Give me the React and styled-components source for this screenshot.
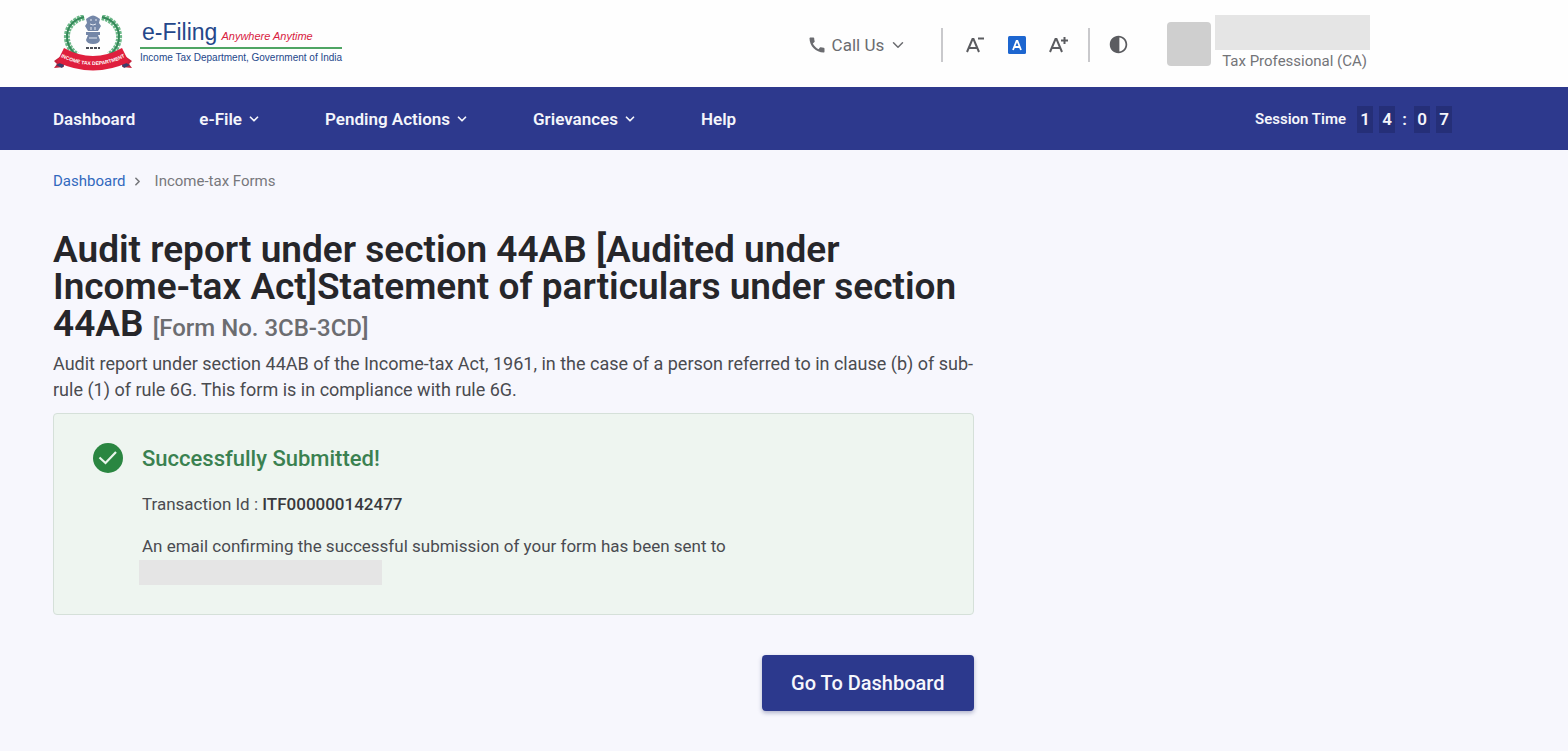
import React from "react";
import styled, { createGlobalStyle } from "styled-components";
import { MdCall, MdContrast } from "react-icons/md";
import { FiChevronDown, FiChevronRight } from "react-icons/fi";

const GlobalStyle = createGlobalStyle`
  * {
    box-sizing: border-box;
  }
  body {
    margin: 0;
    min-height: 100vh;
    background: #f7f7fd;
    color: #4a4b50;
    font-family: Roboto, "Liberation Sans", sans-serif;
  }
  h1, h2, p {
    margin: 0;
  }
  button {
    padding: 0;
    border: 0;
    background: none;
    font-family: inherit;
    cursor: pointer;
  }
  a {
    text-decoration: none;
  }
`;

// top header
const Header = styled.header`
  display: flex;
  align-items: center;
  justify-content: space-between;
  height: 87px;
  padding: 0 196px 0 53px;
  background: #fefefe;
`;

const Brand = styled.a`
  display: flex;
  align-items: center;
  gap: 7px;
  color: #24478a;
  font-family: "Liberation Sans", sans-serif;
`;

const BrandText = styled.div`
  display: flex;
  flex-direction: column;
`;

const BrandTop = styled.div`
  display: flex;
  align-items: baseline;
  gap: 4px;
  padding-left: 2px;
  border-bottom: 2px solid #4fa564;
  line-height: 22px;
`;

const BrandName = styled.span`
  font-size: 23px;
`;

const BrandTag = styled.span`
  color: #d8213f;
  font-size: 11px;
  font-style: italic;
`;

const BrandSub = styled.span`
  font-size: 10px;
  line-height: 18px;
`;

const Tools = styled.div`
  display: flex;
  align-items: center;
  padding-top: 2px;
`;

const CallButton = styled.button`
  display: flex;
  align-items: center;
  gap: 5px;
  margin-right: 34px;
  color: #6b6c70;
  font-size: 17px;
`;

const ToolGroup = styled.div`
  display: flex;
  align-items: center;
  gap: 23px;
  height: 34px;
  padding: 0 20px 0 ${(props) => (props.$narrow ? "18px" : "23px")};
  border-left: 2px solid #c9c9cc;
`;

const ToolButton = styled.button`
  display: flex;
  color: #5b5c60;
`;

const Profile = styled.div`
  display: flex;
  align-items: center;
  gap: 4px;
  margin-left: 18px;
  padding-bottom: 2px;
`;

const Avatar = styled.div`
  width: 44px;
  height: 44px;
  border-radius: 4px;
  background: #cfcfcf;
`;

const ProfileText = styled.div`
  display: flex;
  flex-direction: column;
  font-size: 15px;
  line-height: 22px;
  color: #737478;
`;

const Role = styled.span`
  padding: 0 5px 0 7px;
`;

const Masked = styled.div`
  width: ${(props) => props.$width};
  height: ${(props) => props.$height};
  background: #e5e5e5;
`;

// main menu
const Nav = styled.nav`
  display: flex;
  align-items: center;
  justify-content: space-between;
  height: 63px;
  padding: 1px 116px 0 53px;
  background: #2d398d;
  color: #f4f5fb;
`;

const Menu = styled.div`
  display: flex;
  gap: 64px;
`;

const MenuItem = styled.button`
  display: flex;
  align-items: center;
  gap: 5px;
  color: inherit;
  font-size: 17px;
  font-weight: 600;
  line-height: 24px;
`;

const Session = styled.div`
  display: flex;
  align-items: center;
  gap: 6px;
  font-size: 17px;
  font-weight: 600;
`;

const SessionLabel = styled.span`
  margin-right: 5px;
  font-size: 15px;
`;

const Digit = styled.span`
  width: 16px;
  line-height: 27px;
  text-align: center;
  background: #252f78;
`;

const Colon = styled.span`
  width: 7px;
  text-align: center;
`;

// page content
const Page = styled.main`
  display: grid;
  grid-template-columns: minmax(0, 17fr) minmax(0, 10fr);
  padding: 20px 53px 40px;
`;

const Content = styled.section`
  grid-column: 1;
`;

const Breadcrumb = styled.nav`
  display: flex;
  align-items: center;
  gap: 5px;
  margin-bottom: 39px;
  color: #77787c;
  font-size: 15px;
  line-height: 22px;
`;

const CrumbLink = styled.a`
  color: #3269bd;
`;

const CrumbText = styled.span`
  margin-left: 6px;
`;

const Title = styled.h1`
  color: #26262a;
  font-size: 37px;
  font-weight: 600;
  line-height: 37px;
`;

const FormNo = styled.span`
  color: #6c6d71;
  font-size: 24px;
  font-weight: 500;
  line-height: 24px;
`;

const Description = styled.p`
  margin: 9px 0 10px;
  font-size: 18px;
  line-height: 26px;
`;

const SuccessBox = styled.div`
  display: flex;
  align-items: flex-start;
  gap: 16px;
  padding: 29px 39px;
  border: 1px solid #d5e0d9;
  border-radius: 4px;
  background: #eef5f0;
`;

const SuccessBody = styled.div`
  display: flex;
  flex-direction: column;
  font-size: 17px;
  line-height: 26px;
`;

const SuccessTitle = styled.h2`
  margin-bottom: 16px;
  padding-left: 3px;
  color: #3a8150;
  font-size: 22px;
  font-weight: 500;
  line-height: 32px;
`;

const SuccessText = styled.p`
  margin-bottom: ${(props) => (props.$last ? "1px" : "16px")};
  padding-left: 3px;
  b {
    color: #38393d;
    font-weight: 500;
  }
`;

const Actions = styled.div`
  display: flex;
  justify-content: flex-end;
  margin-top: 40px;
`;

const PrimaryButton = styled.button`
  height: 56px;
  padding: 0 29px;
  border-radius: 4px;
  background: #2c398d;
  box-shadow: 0 2px 4px rgba(40, 50, 110, 0.35);
  color: #f6f7fc;
  font-size: 20px;
  font-weight: 500;
`;

const menuItems = [
  { label: "Dashboard" },
  { label: "e-File", drop: true },
  { label: "Pending Actions", drop: true },
  { label: "Grievances", drop: true },
  { label: "Help" },
];

const Emblem = () => (
  <svg width="80" height="58" viewBox="0 3 80 58" aria-hidden="true">
    {/* laurel */}
    <g fill="none" stroke="#6db889">
      <path d="M31 5 C9 11 10 34 24 43" strokeWidth="6" strokeDasharray="2.8 1" />
      <path d="M49 5 C71 11 70 34 56 43" strokeWidth="6" strokeDasharray="2.8 1" />
      <path d="M31 5 C9 11 10 34 24 43 M49 5 C71 11 70 34 56 43" stroke="#35895a" strokeWidth="2" />
    </g>
    {/* lion capital */}
    <g fill="#7487a8">
      <path d="M36 5 Q40 2 44 5 L47 7 L46 11 L48 14 L45 19 H35 L32 14 L34 11 L33 7 Z" />
      <rect x="33" y="20" width="14" height="3" />
      <path d="M35 23 H45 L47 28 Q46 32 40 32 Q34 32 33 28 Z" />
    </g>
    <path d="M37 8 H39 M42 8 H44 M37 12 Q40 14 43 12 M38 15 V18 M42 15 V18 M36 26 H44" stroke="#e4e9f1" fill="none" />
    <path d="M33 36 H47" stroke="#4b4f58" strokeWidth="2" strokeDasharray="3 1" />
    {/* ribbon */}
    <path d="M8 44 L1 49 L4 52 L1 56 L11 55 Z M72 44 L79 49 L76 52 L79 56 L69 55 Z" fill="#c4233c" />
    <path d="M3 53 L7 51 L12 52 L9 56 Z M77 53 L73 51 L68 52 L71 56 Z" fill="#39406b" />
    <path d="M11 36 Q40 52 69 36 L76 50 Q40 67 4 50 Z" fill="#df1f3d" />
    <path id="ribbon" d="M6 44 Q40 62 74 44" fill="none" />
    <text fill="#fff" fontSize="5" fontWeight="700" textAnchor="middle" fontFamily="Liberation Sans, sans-serif">
      <textPath href="#ribbon" startOffset="50%">INCOME TAX DEPARTMENT</textPath>
    </text>
  </svg>
);

// letter A with a minus or plus at the top right
const FontSizeIcon = ({ sign }) => (
  <svg width="19" height="18" viewBox="0 0 19 18" fill="none" stroke="currentColor" strokeWidth="2">
    <path d="M1 16 L6.5 3 H7.5 L13 16 M3 12 H11" />
    <path d={sign === "plus" ? "M12 4.5 H19 M15.5 1 V8" : "M12 2.5 H18"} />
  </svg>
);

const FontResetIcon = () => (
  <svg width="18" height="18" viewBox="0 0 18 18" fill="none">
    <rect width="18" height="18" rx="1.5" fill="#1d66d0" />
    <path d="M5 14 L8.6 5 H9.4 L13 14 M6.3 11 H11.7" stroke="#fff" strokeWidth="1.8" />
  </svg>
);

const SuccessIcon = () => (
  <svg width="30" height="30" viewBox="0 0 30 30" fill="none" aria-hidden="true">
    <circle cx="15" cy="15" r="15" fill="#2a8641" />
    <path d="M6.5 14.5 L12.5 20 L23 9" stroke="#e9f5ec" strokeWidth="2.2" />
  </svg>
);

const App = () => {
  return (
    <>
      <GlobalStyle />
      <Header>
        <Brand href="#">
          <Emblem />
          <BrandText>
            <BrandTop>
              <BrandName>e-Filing</BrandName>
              <BrandTag>Anywhere Anytime</BrandTag>
            </BrandTop>
            <BrandSub>Income Tax Department, Government of India</BrandSub>
          </BrandText>
        </Brand>
        <Tools>
          <CallButton type="button">
            <MdCall size={20} />
            Call Us
            <FiChevronDown size={18} />
          </CallButton>
          <ToolGroup>
            <ToolButton type="button" aria-label="Decrease text size">
              <FontSizeIcon sign="minus" />
            </ToolButton>
            <ToolButton type="button" aria-label="Reset text size">
              <FontResetIcon />
            </ToolButton>
            <ToolButton type="button" aria-label="Increase text size">
              <FontSizeIcon sign="plus" />
            </ToolButton>
          </ToolGroup>
          <ToolGroup $narrow>
            <ToolButton type="button" aria-label="Change contrast">
              <MdContrast size={21} />
            </ToolButton>
          </ToolGroup>
          <Profile>
            <Avatar />
            <ProfileText>
              <Masked $width="155px" $height="35px" />
              <Role>Tax Professional (CA)</Role>
            </ProfileText>
          </Profile>
        </Tools>
      </Header>

      <Nav>
        <Menu>
          {menuItems.map((item) => (
            <MenuItem type="button" key={item.label}>
              {item.label}
              {item.drop ? <FiChevronDown size={14} strokeWidth={3} /> : null}
            </MenuItem>
          ))}
        </Menu>
        <Session>
          <SessionLabel>Session Time</SessionLabel>
          <Digit>1</Digit>
          <Digit>4</Digit>
          <Colon>:</Colon>
          <Digit>0</Digit>
          <Digit>7</Digit>
        </Session>
      </Nav>

      <Page>
        <Content>
          <Breadcrumb aria-label="Breadcrumb">
            <CrumbLink href="#">Dashboard</CrumbLink>
            <FiChevronRight size={13} strokeWidth={3} />
            <CrumbText>Income-tax Forms</CrumbText>
          </Breadcrumb>

          <Title>
            Audit report under section 44AB [Audited under Income-tax
            Act]Statement of particulars under section 44AB{" "}
            <FormNo>[Form No. 3CB-3CD]</FormNo>
          </Title>
          <Description>
            Audit report under section 44AB of the Income-tax Act, 1961, in the
            case of a person referred to in clause (b) of sub-rule (1) of rule
            6G. This form is in compliance with rule 6G.
          </Description>

          <SuccessBox role="status">
            <SuccessIcon />
            <SuccessBody>
              <SuccessTitle>Successfully Submitted!</SuccessTitle>
              <SuccessText>
                Transaction Id : <b>ITF000000142477</b>
              </SuccessText>
              <SuccessText $last>
                An email confirming the successful submission of your form has
                been sent to
              </SuccessText>
              <Masked $width="243px" $height="25px" />
            </SuccessBody>
          </SuccessBox>

          <Actions>
            <PrimaryButton type="button">Go To Dashboard</PrimaryButton>
          </Actions>
        </Content>
      </Page>
    </>
  );
};

export default App;
